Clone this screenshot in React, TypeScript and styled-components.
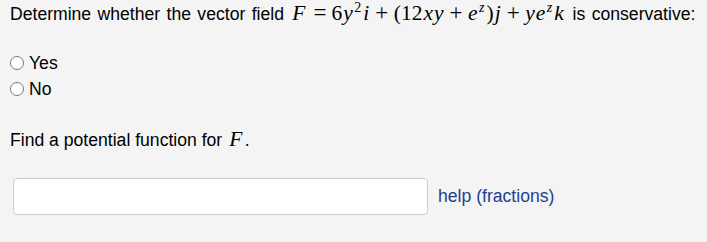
import React from 'react';
import styled, { createGlobalStyle } from 'styled-components';

const GlobalStyle = createGlobalStyle`
  body {
    margin: 0;
    background: #f4f4f4;
    font-family: Arial, "Liberation Sans", sans-serif;
    color: #000;
  }
`;

const Page = styled.div`
  display: flex;
  flex-direction: column;
  padding: 1px 10px 0;
  font-size: 17.6px;
`;

const Question = styled.p`
  margin: 0;
  line-height: 24px;
  white-space: nowrap;
  word-spacing: 1.5px;
`;

const Math = styled.span`
  font-family: "Liberation Serif", "DejaVu Serif", serif;
  font-size: 21.5px;
  word-spacing: 0;
  padding: 0 2px 0 2px;
`;

const Num = styled.span<{ $r?: number }>`
  font-style: normal;
  margin-right: ${(p) => p.$r ?? 0}px;
`;

const V = styled.i<{ $r?: number }>`
  margin-right: ${(p) => p.$r ?? 0.5}px;
`;

const Op = styled.span<{ $gap?: number }>`
  font-size: 23px;
  padding: 0 ${(p) => p.$gap ?? 5.5}px;
`;

const Sup = styled.sup`
  font-size: 14px;
  line-height: 0;
  vertical-align: 8px;
  margin: 0 2px 0 1px;
`;

const Choices = styled.div`
  display: flex;
  flex-direction: column;
  margin-top: 24px;
`;

const Choice = styled.label`
  display: flex;
  align-items: center;
  gap: 5px;
  height: 26px;
`;

const Radio = styled.input`
  margin: 0;
  width: 14px;
  height: 14px;
`;

const Prompt = styled.p`
  margin: 25px 0 0;
  line-height: 24px;
`;

const AnswerRow = styled.div`
  display: flex;
  align-items: center;
  gap: 10px;
  margin-top: 26px;
  padding-left: 3px;
`;

const AnswerInput = styled.input`
  width: 415px;
  height: 37px;
  box-sizing: border-box;
  border: 1px solid #ccc;
  border-radius: 4px;
  background: #fff;
  padding: 4px 8px;
  font-size: 16px;
`;

const Help = styled.a`
  color: #1d3f8f;
  text-decoration: none;
`;

export default function App() {
  return (
    <>
      <GlobalStyle />
      <Page>
        <Question>
          Determine whether the vector field{' '}
          <Math>
            <V $r={3}>F</V>
            <Op $gap={5}>=</Op>
            <Num $r={1}>6</Num>
            <V>y</V>
            <Sup>2</Sup>
            <V>i</V>
            <Op>+</Op>
            <Num $r={1}>(12</Num>
            <V $r={1}>x</V>
            <V>y</V>
            <Op>+</Op>
            <V>e</V>
            <Sup><i>z</i></Sup>
            <Num $r={1}>)</Num>
            <V>j</V>
            <Op>+</Op>
            <V $r={1}>y</V>
            <V>e</V>
            <Sup><i>z</i></Sup>
            <V>k</V>
          </Math>{' '}
          is conservative:
        </Question>
        <Choices>
          <Choice>
            <Radio type="radio" name="c" />
            Yes
          </Choice>
          <Choice>
            <Radio type="radio" name="c" />
            No
          </Choice>
        </Choices>
        <Prompt>
          Find a potential function for{' '}
          <Math>
            <V>F</V>
          </Math>
          .
        </Prompt>
        <AnswerRow>
          <AnswerInput type="text" />
          <Help href="#">help (fractions)</Help>
        </AnswerRow>
      </Page>
    </>
  );
}
